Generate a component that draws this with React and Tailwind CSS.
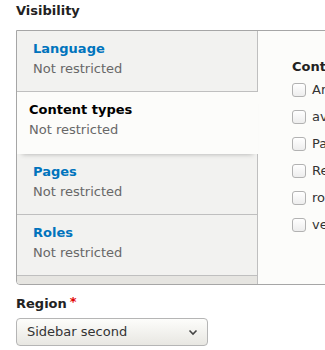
import React from 'react';

const tabs = [
  { title: 'Language', summary: 'Not restricted' },
  { title: 'Content types', summary: 'Not restricted', selected: true },
  { title: 'Pages', summary: 'Not restricted' },
  { title: 'Roles', summary: 'Not restricted' },
];

const bundles = ['Article', 'avis client', 'Page de base', 'Recette', 'rocket', 'version'];

function TabItem({ title, summary, selected }) {
  if (selected) {
    return (
      <div className="relative z-10 h-[62px] bg-[#fcfcfa] pl-[12px] pt-[8px] shadow-[0_5px_5px_-5px_rgba(0,0,0,0.3)]">
        <div className="font-bold text-[#000]">{title}</div>
        <div className="text-[#686868]">{summary}</div>
      </div>
    );
  }
  return (
    <div className="h-[61px] bg-[#f2f2f0] border-r border-b border-[#bfbfbf] pl-[16px] pt-[8px]">
      <div className="font-bold text-[#0074bd]">{title}</div>
      <div className="text-[#686868]">{summary}</div>
    </div>
  );
}

export default function App() {
  return (
    <div className="w-[325px] h-[350px] overflow-hidden bg-white text-[13px] leading-[20px] text-[#222] font-['DejaVu_Sans',sans-serif]">
      <div className="pl-4">
        <div className="font-bold pt-px leading-[19px]">Visibility</div>

        {/* vertical tabs */}
        <div className="mt-[10px] w-[420px] h-[255px] flex border border-[#a6a6a6] rounded-bl-[4px] overflow-hidden">
          <div className="w-[241px] flex flex-col bg-[#e6e5e1]">
            {tabs.map((t) => (
              <TabItem key={t.title} {...t} />
            ))}
            <div className="flex-1 border-r border-[#bfbfbf]"></div>
          </div>

          <div className="flex-1 bg-[#fcfcfa] pl-[34px] pt-[26px]">
            <div className="font-bold leading-[19px]">Content types</div>
            {bundles.map((b) => (
              <div key={b} className="h-[27px] flex items-center gap-[6px] whitespace-nowrap">
                <span className="w-[14px] h-[14px] rounded-[3px] border border-[#b2b2b2] bg-gradient-to-b from-white to-[#ededed]"></span>
                <span className="text-[#333]">{b}</span>
              </div>
            ))}
          </div>
        </div>

        {/* region */}
        <div className="mt-[9px] flex items-start">
          <span className="font-bold">Region</span>
          <span className="ml-[3px] text-[#e20000] font-bold leading-[16px]">*</span>
        </div>
        <div className="mt-[4px] w-[192px] h-[28px] flex items-center justify-between pl-[10px] pr-[9px] rounded-[4px] border border-[#b5b5b5] bg-gradient-to-b from-[#fdfdfb] to-[#e8e7e2] text-[#333]">
          <span>Sidebar second</span>
          <svg width="10" height="7" viewBox="0 0 10 7" fill="none">
            <polyline points="1.5,1.5 5,5 8.5,1.5" stroke="#444" strokeWidth="1.6" />
          </svg>
        </div>
      </div>
    </div>
  );
}
